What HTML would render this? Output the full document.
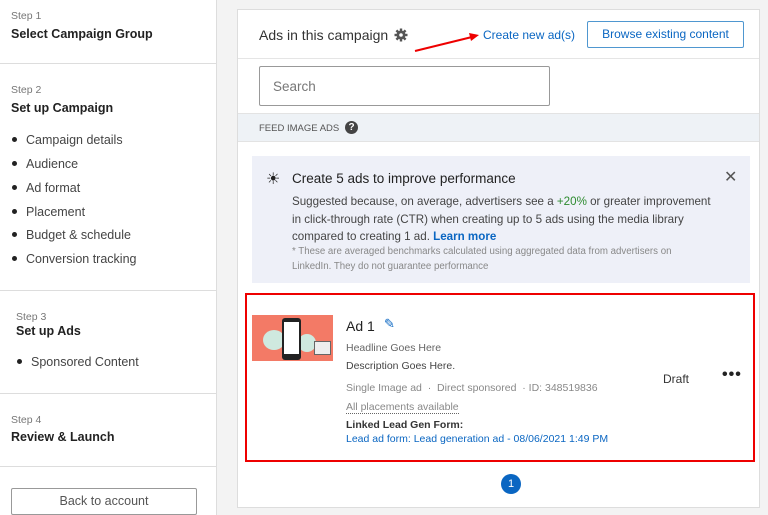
<!DOCTYPE html><html><head><style>
*{box-sizing:border-box;margin:0;padding:0}
body{width:768px;height:515px;overflow:hidden;background:#f3f3f3;font-family:"Liberation Sans",sans-serif;color:#333;position:relative}
.a{position:absolute;white-space:nowrap}
.side{position:absolute;left:0;top:0;width:217px;height:515px;background:#fff;border-right:1px solid #ddd}
.hr{position:absolute;left:0;width:217px;height:1px;background:#ddd}
.sl{font-size:10.5px;color:#777}
.st{font-size:12.5px;color:#222;font-weight:600}
.li{font-size:12.5px;color:#444}
.li:before{content:"";display:inline-block;width:5px;height:5px;border-radius:50%;background:#222;margin-right:9px;vertical-align:2px}
.card{position:absolute;left:237px;top:9px;width:523px;height:499px;background:#fff;border:1px solid #ddd}
</style></head><body>
<div class="side">
<div class="a sl" style="left:11px;top:10px">Step 1</div>
<div class="a st" style="left:11px;top:27px">Select Campaign Group</div>
<div class="hr" style="top:63px"></div>
<div class="a sl" style="left:11px;top:84px">Step 2</div>
<div class="a st" style="left:11px;top:101px">Set up Campaign</div>
<div class="a li" style="left:12px;top:133px">Campaign details</div>
<div class="a li" style="left:12px;top:157px">Audience</div>
<div class="a li" style="left:12px;top:181px">Ad format</div>
<div class="a li" style="left:12px;top:205px">Placement</div>
<div class="a li" style="left:12px;top:228px">Budget &amp; schedule</div>
<div class="a li" style="left:12px;top:252px">Conversion tracking</div>
<div class="hr" style="top:290px"></div>
<div class="a sl" style="left:16px;top:311px">Step 3</div>
<div class="a st" style="left:16px;top:324px">Set up Ads</div>
<div class="a li" style="left:17px;top:355px">Sponsored Content</div>
<div class="hr" style="top:393px"></div>
<div class="a sl" style="left:11px;top:414px">Step 4</div>
<div class="a st" style="left:11px;top:430px">Review &amp; Launch</div>
<div class="hr" style="top:466px"></div>
<div class="a" style="left:11px;top:488px;width:186px;height:27px;border:1px solid #999;border-radius:2px;text-align:center;font-size:12.5px;color:#555;line-height:25px">Back to account</div>
</div>
<div class="card"></div>
<div class="a" style="left:259px;top:27px;font-size:14px;color:#333">Ads in this campaign</div>
<svg class="a" style="left:394px;top:28px" width="14" height="14" viewBox="0 0 14 14"><g fill="#555"><circle cx="7" cy="7" r="4.5"/><rect x="5.8" y="0.5" width="2.4" height="13"/><rect x="0.5" y="5.8" width="13" height="2.4"/><rect x="5.8" y="0.5" width="2.4" height="13" transform="rotate(45 7 7)"/><rect x="5.8" y="0.5" width="2.4" height="13" transform="rotate(-45 7 7)"/></g><circle cx="7" cy="7" r="1.8" fill="#fff"/></svg>
<svg class="a" style="left:410px;top:28px" width="75" height="25"><line x1="5" y1="23" x2="62" y2="9" stroke="#e00" stroke-width="2"/><polygon points="69,7 59,5 61,13" fill="#e00"/></svg>
<div class="a" style="left:483px;top:28px;font-size:12px;color:#0a66c2">Create new ad(s)</div>
<div class="a" style="left:587px;top:21px;width:157px;height:27px;border:1px solid #4f97d0;border-radius:2px;font-size:12px;color:#0a66c2;text-align:center;line-height:25px">Browse existing content</div>
<div class="a" style="left:238px;top:58px;width:521px;height:1px;background:#e5e5e5"></div>
<div class="a" style="left:259px;top:66px;width:291px;height:40px;border:1px solid #999;border-radius:2px;font-size:13.5px;color:#777;padding:12px 13px">Search</div>
<div class="a" style="left:238px;top:113px;width:521px;height:29px;background:#eef2f6;border-top:1px solid #e3e3e3;border-bottom:1px solid #e3e3e3"></div>
<div class="a" style="left:259px;top:123px;font-size:9.5px;color:#555">FEED IMAGE ADS</div>
<div class="a" style="left:345px;top:121px;width:13px;height:13px;border-radius:50%;background:#444;color:#fff;font-size:10px;font-weight:bold;text-align:center;line-height:13px">?</div>
<div class="a" style="left:252px;top:156px;width:498px;height:127px;background:#eef0f8"></div>
<div class="a" style="left:266px;top:169px;font-size:16px;color:#222">☀</div>
<div class="a" style="left:292px;top:171px;font-size:13.5px;color:#222">Create 5 ads to improve performance</div>
<div class="a" style="left:724px;top:167px;font-size:16px;color:#555">✕</div>
<div class="a" style="left:292px;top:193px;font-size:11.6px;color:#444;line-height:17.5px">Suggested because, on average, advertisers see a <span style="color:#2e8b30">+20%</span> or greater improvement<br>in click-through rate (CTR) when creating up to 5 ads using the media library<br>compared to creating 1 ad. <span style="color:#0a66c2;font-weight:bold">Learn more</span></div>
<div class="a" style="left:292px;top:244px;font-size:9.7px;color:#888;line-height:15px">* These are averaged benchmarks calculated using aggregated data from advertisers on<br>LinkedIn. They do not guarantee performance</div>
<div class="a" style="left:245px;top:293px;width:510px;height:169px;border:2px solid #e00"></div>
<div class="a" style="left:252px;top:315px;width:81px;height:46px;background:#f37a66"></div>
<div class="a" style="left:263px;top:330px;width:22px;height:20px;border-radius:50%;background:#cfe9df"></div>
<div class="a" style="left:298px;top:334px;width:18px;height:18px;border-radius:50%;background:#cfe9df"></div>
<div class="a" style="left:282px;top:318px;width:19px;height:42px;background:#222;border-radius:3px"><div style="margin:4px 2px;height:32px;background:#fff"></div></div>
<div class="a" style="left:314px;top:341px;width:17px;height:14px;background:#eee;border:1px solid #666"></div>
<div class="a" style="left:346px;top:318px;font-size:14px;color:#222">Ad 1</div>
<div class="a" style="left:384px;top:316px;font-size:13px;color:#0a66c2">✎</div>
<div class="a" style="left:346px;top:342px;font-size:10.5px;color:#666">Headline Goes Here</div>
<div class="a" style="left:346px;top:360px;font-size:10.5px;color:#444">Description Goes Here.</div>
<div class="a" style="left:346px;top:382px;font-size:10.5px;color:#888">Single Image ad &nbsp;·&nbsp; Direct sponsored &nbsp;· ID: 348519836</div>
<div class="a" style="left:346px;top:401px;font-size:10.5px;color:#888;border-bottom:1px dotted #666">All placements available</div>
<div class="a" style="left:346px;top:419px;font-size:10.5px;color:#333;font-weight:bold">Linked Lead Gen Form:</div>
<div class="a" style="left:346px;top:433px;font-size:10.5px;color:#0a66c2">Lead ad form: Lead generation ad - 08/06/2021 1:49 PM</div>
<div class="a" style="left:663px;top:372px;font-size:12px;color:#333">Draft</div>
<div class="a" style="left:722px;top:366px;font-size:16px;color:#222;letter-spacing:1px;font-weight:bold">•••</div>
<div class="a" style="left:501px;top:474px;width:20px;height:20px;border-radius:50%;background:#0a66c2;color:#fff;font-size:11px;text-align:center;line-height:20px">1</div>
</body></html>
